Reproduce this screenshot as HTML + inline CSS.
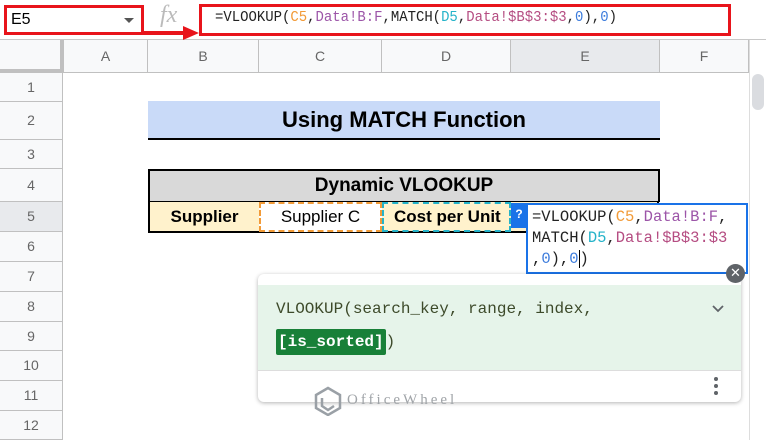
<!DOCTYPE html>
<html><head><meta charset="utf-8"><style>
*{margin:0;padding:0;box-sizing:border-box}
body{width:766px;height:440px;overflow:hidden;background:#fff;font-family:"Liberation Sans",Arial,sans-serif;position:relative}
.a{position:absolute}
.mono{font-family:"Liberation Mono","DejaVu Sans Mono",monospace}
.rh{position:absolute;left:0;width:63px;background:#f8f9fa;border-bottom:1px solid #c0c0c0;border-right:1px solid #c0c0c0;color:#666;font-size:14px;text-align:center}
.ch{position:absolute;top:40px;height:33px;background:#f8f9fa;border-right:1px solid #c0c0c0;border-bottom:1px solid #c0c0c0;color:#666;font-size:14px;text-align:center;line-height:32px}
</style></head><body>
<div class="a" style="left:0;top:0;width:766px;height:40px;background:#fff;border-bottom:1px solid #c8c8c8"></div>
<div class="a" style="left:4px;top:5px;width:140px;height:30px;border:3px solid #e8141b;font-size:16px;line-height:24px;padding-left:4px;color:#000">E5</div>
<div class="a" style="left:124px;top:18px;width:0;height:0;border-left:5px solid transparent;border-right:5px solid transparent;border-top:5px solid #555"></div>
<div class="a" style="left:160px;top:2px;font-family:'Liberation Serif',serif;font-style:italic;font-size:24px;color:#bbb">fx</div>
<div class="a" style="left:199px;top:4px;width:532px;height:32px;border:3px solid #e8141b"></div>
<div class="a mono" style="left:215px;top:9px;font-size:15px;color:#222;white-space:pre;transform:scaleX(0.93);transform-origin:left">=VLOOKUP(<span style="color:#f29b38">C5</span>,<span style="color:#9c55a8">Data!B:F</span>,MATCH(<span style="color:#25b3c9">D5</span>,<span style="color:#b54d82">Data!$B$3:$3</span>,<span style="color:#3b7bdc">0</span>),<span style="color:#3b7bdc">0</span>)</div>
<div class="a" style="left:143px;top:31px;width:44px;height:4px;background:#e8141b"></div>
<div class="a" style="left:183px;top:26px;width:0;height:0;border-top:7px solid transparent;border-bottom:7px solid transparent;border-left:16px solid #e8141b"></div>
<div class="a" style="left:0;top:40px;width:64px;height:33px;background:#f8f9fa;border-right:4px solid #c0c0c0;border-bottom:4px solid #c0c0c0"></div>
<div class="ch" style="left:64px;width:84px">A</div>
<div class="ch" style="left:148px;width:111px">B</div>
<div class="ch" style="left:259px;width:123px">C</div>
<div class="ch" style="left:382px;width:129px">D</div>
<div class="ch" style="left:511px;width:149px;background:#e8eaed">E</div>
<div class="ch" style="left:660px;width:89px">F</div>
<div class="a" style="left:749px;top:40px;width:17px;height:400px;background:#fff;border-left:1px solid #ddd"></div>
<div class="a" style="left:752px;top:74px;width:12px;height:36px;background:#dadce0;border-radius:6px"></div>
<div class="rh" style="top:73px;height:29px;line-height:28px">1</div>
<div class="rh" style="top:102px;height:38px;line-height:37px">2</div>
<div class="rh" style="top:140px;height:29px;line-height:28px">3</div>
<div class="rh" style="top:169px;height:33px;line-height:32px">4</div>
<div class="rh" style="top:202px;height:30px;line-height:29px;background:#e8eaed">5</div>
<div class="rh" style="top:232px;height:30px;line-height:29px">6</div>
<div class="rh" style="top:262px;height:30px;line-height:29px">7</div>
<div class="rh" style="top:292px;height:30px;line-height:29px">8</div>
<div class="rh" style="top:322px;height:29px;line-height:28px">9</div>
<div class="rh" style="top:351px;height:30px;line-height:29px">10</div>
<div class="rh" style="top:381px;height:30px;line-height:29px">11</div>
<div class="rh" style="top:411px;height:29px;line-height:28px">12</div>
<div class="a" style="left:148px;top:101px;width:512px;height:39px;background:#c9daf8;border-bottom:2px solid #000;font-weight:bold;font-size:22px;text-align:center;line-height:38px">Using MATCH Function</div>
<div class="a" style="left:148px;top:169px;width:512px;height:33px;background:#d9d9d9;border:2px solid #000;border-bottom:1px solid #000;font-weight:bold;font-size:19px;text-align:center;line-height:30px">Dynamic VLOOKUP</div>
<div class="a" style="left:148px;top:202px;width:511px;height:31px;background:#fff2cc;border:2px solid #000;border-top:none"></div>
<div class="a" style="left:150px;top:202px;width:109px;height:29px;font-weight:bold;font-size:17px;text-align:center;line-height:29px">Supplier</div>
<div class="a" style="left:259px;top:202px;width:123px;height:30px;background:#fff;border:2px dashed #f29b38;font-size:17px;text-align:center;line-height:26px">Supplier C</div>
<div class="a" style="left:382px;top:202px;width:129px;height:30px;border:2px dashed #25b3c9;font-weight:bold;font-size:17px;line-height:26px;padding-left:10px;white-space:nowrap;overflow:hidden">Cost per Unit</div>
<div class="a" style="left:511px;top:203px;width:16px;height:25px;background:#1a73e8;color:#fff;font-weight:bold;font-size:12px;text-align:center;line-height:22px">?</div>
<div class="a mono" style="left:526px;top:203px;width:222px;height:71px;background:#fff;border:2px solid #1a73e8;font-size:15.5px;line-height:21px;padding:2px 0 0 4px;color:#222;white-space:pre">=VLOOKUP(<span style="color:#f29b38">C5</span>,<span style="color:#9c55a8">Data!B:F</span>,
MATCH(<span style="color:#25b3c9">D5</span>,<span style="color:#b54d82">Data!$B$3:$3</span>
,<span style="color:#3b7bdc">0</span>),<span style="color:#3b7bdc">0</span><span style="border-left:1px solid #000"></span>)</div>
<div class="a" style="left:258px;top:274px;width:483px;height:128px;background:#fff;border-radius:6px;box-shadow:0 1px 4px rgba(0,0,0,.3)"></div>
<div class="a" style="left:258px;top:285px;width:483px;height:86px;background:#e6f4ea;border-bottom:1px solid #ddd"></div>
<div class="a mono" style="left:276px;top:300px;font-size:16px;color:#3d4a2a;white-space:pre">VLOOKUP(search_key, range, index,</div>
<div class="a mono" style="left:276px;top:333px;font-size:16px;color:#3d4a2a;white-space:pre"><span style="background:#188038;color:#fff;font-weight:bold;padding:4px 2px;border-radius:2px">[is_sorted]</span>)</div>
<svg class="a" style="left:710px;top:302px" width="16" height="12"><path d="M3 4 L8 9 L13 4" stroke="#5f6368" stroke-width="1.8" fill="none"/></svg>
<div class="a" style="left:714px;top:377px;width:4px;height:4px;border-radius:2px;background:#5f6368;box-shadow:0 7px 0 #5f6368,0 14px 0 #5f6368"></div>
<div class="a" style="left:726px;top:264px;width:19px;height:19px;border-radius:50%;background:#5f6368;color:#fff;font-size:13px;text-align:center;line-height:18px">✕</div>
<svg class="a" style="left:313px;top:386px" width="30" height="30"><path d="M15 2 L27 9 L27 22 L15 29 L3 22 L3 9 Z M9 12 L9 20 L15 24 L21 20" stroke="#9aa0a6" stroke-width="2.5" fill="none"/></svg>
<div class="a" style="left:347px;top:392px;font-family:'Liberation Serif',serif;font-size:15px;letter-spacing:3px;color:#a0a4a8">OfficeWheel</div>
</body></html>
